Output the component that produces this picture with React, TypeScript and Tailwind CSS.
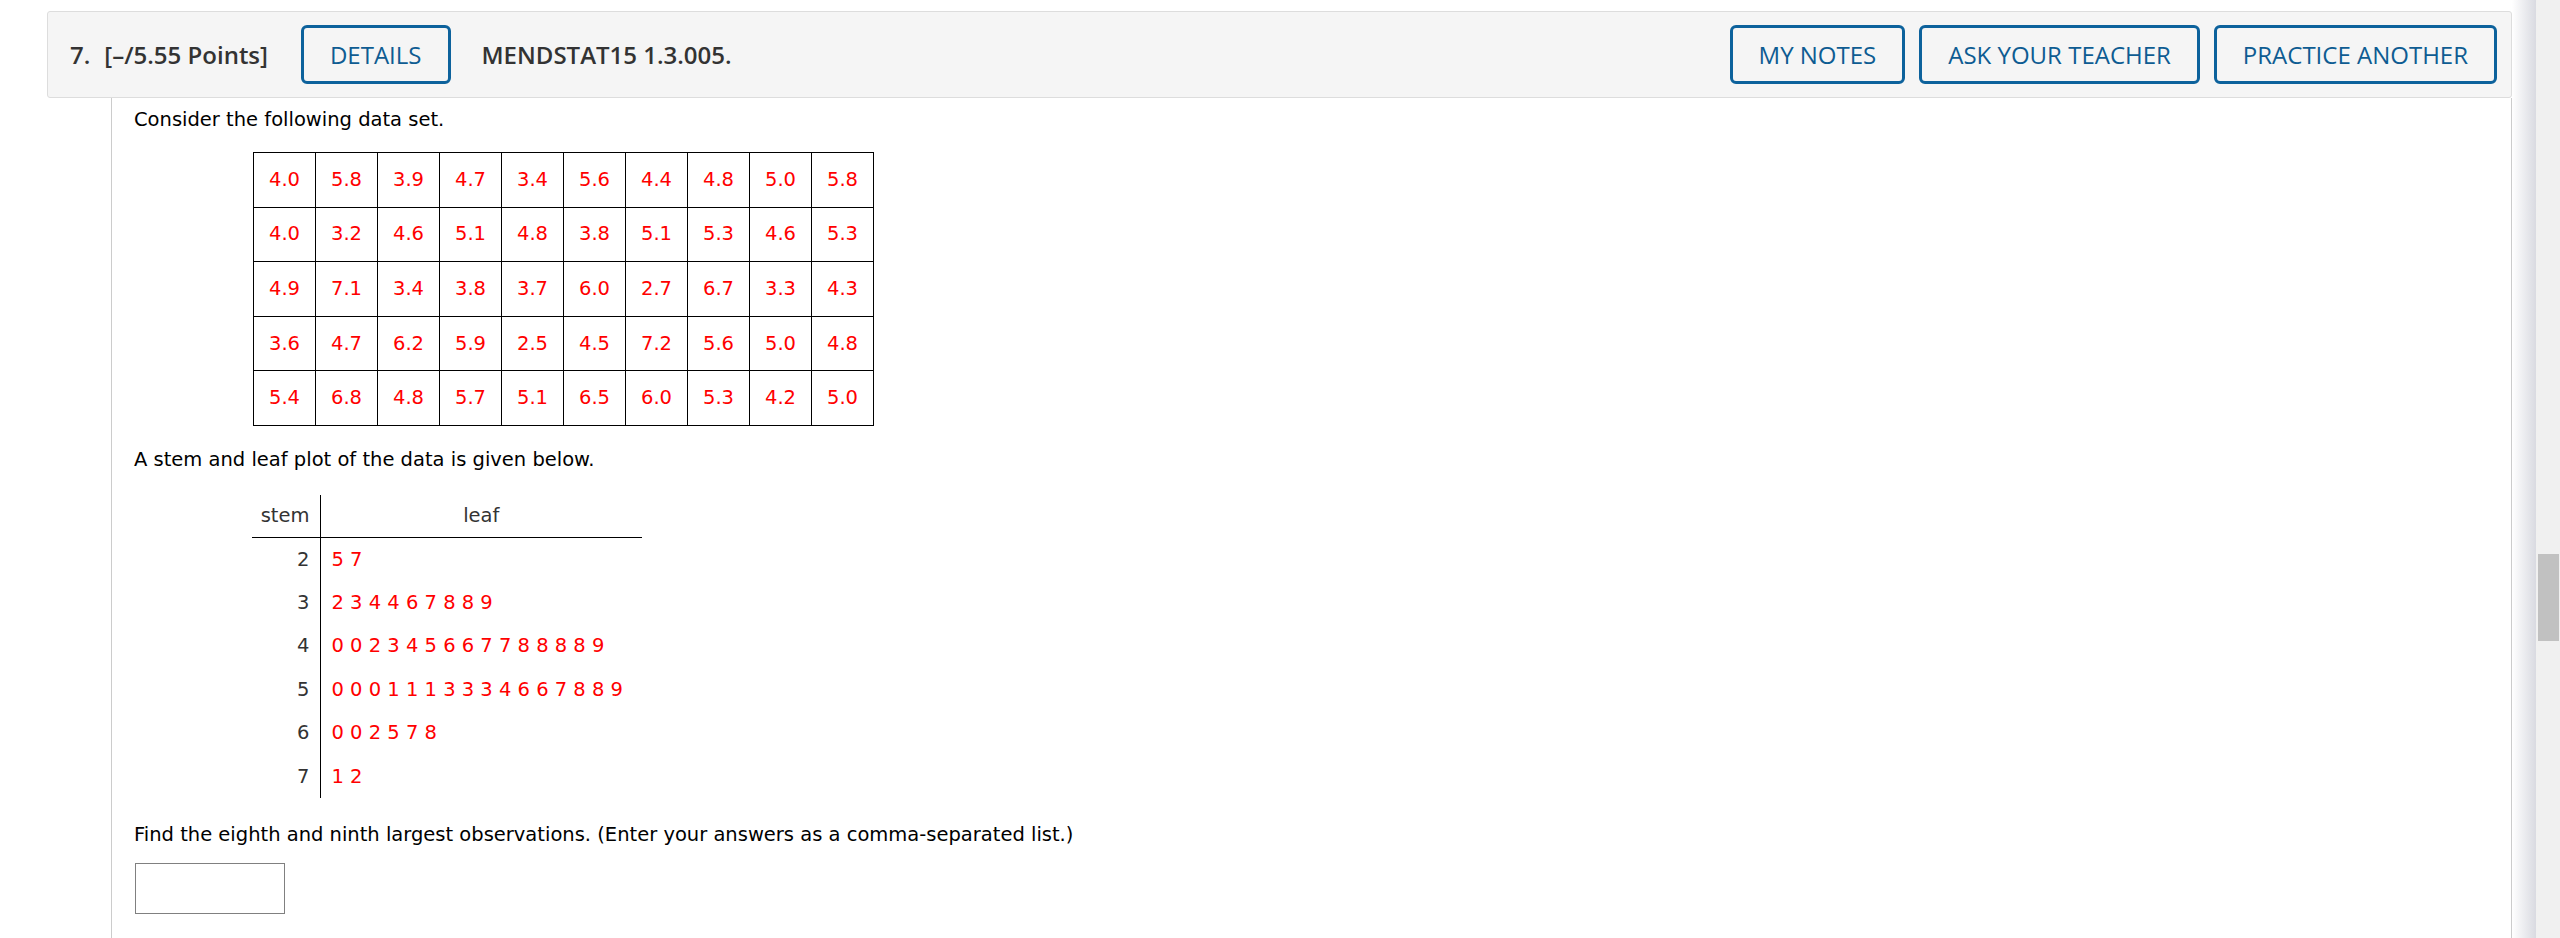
const DATA: string[][] = [
  ['4.0', '5.8', '3.9', '4.7', '3.4', '5.6', '4.4', '4.8', '5.0', '5.8'],
  ['4.0', '3.2', '4.6', '5.1', '4.8', '3.8', '5.1', '5.3', '4.6', '5.3'],
  ['4.9', '7.1', '3.4', '3.8', '3.7', '6.0', '2.7', '6.7', '3.3', '4.3'],
  ['3.6', '4.7', '6.2', '5.9', '2.5', '4.5', '7.2', '5.6', '5.0', '4.8'],
  ['5.4', '6.8', '4.8', '5.7', '5.1', '6.5', '6.0', '5.3', '4.2', '5.0'],
];

const STEMS: { stem: string; leaves: string }[] = [
  { stem: '2', leaves: '5 7' },
  { stem: '3', leaves: '2 3 4 4 6 7 8 8 9' },
  { stem: '4', leaves: '0 0 2 3 4 5 6 6 7 7 8 8 8 8 9' },
  { stem: '5', leaves: '0 0 0 1 1 1 3 3 3 4 6 6 7 8 8 9' },
  { stem: '6', leaves: '0 0 2 5 7 8' },
  { stem: '7', leaves: '1 2' },
];

function HeaderButton({ label }: { label: string }) {
  return (
    <button className="flex h-[59px] items-center rounded-[6px] border-[3px] border-[#0d629c] px-[26px] text-[24px] leading-none text-[#0e5c92]">
      {label}
    </button>
  );
}

export default function App() {
  return (
    <div className="flex h-[938px] w-[2560px] overflow-hidden bg-white">
      <main className="flex w-[2512px] flex-none flex-col pl-[47px] pt-[11px]">
        {/* question header */}
        <div className="flex h-[87px] items-center rounded-[3px] border border-[#dddddd] bg-[#f5f5f5] pl-[22px] pr-[14px] font-['Open_Sans',sans-serif] text-[24px] text-[#333333]">
          <span className="font-semibold">7.</span>
          <span className="ml-[14px] font-semibold">[–/5.55 Points]</span>
          <div className="ml-[33px]">
            <HeaderButton label="DETAILS" />
          </div>
          <span className="ml-[31px] font-semibold">MENDSTAT15 1.3.005.</span>
          <div className="ml-auto flex gap-[14px]">
            <HeaderButton label="MY NOTES" />
            <HeaderButton label="ASK YOUR TEACHER" />
            <HeaderButton label="PRACTICE ANOTHER" />
          </div>
        </div>

        {/* question body */}
        <div className="ml-[64px] flex-1 border-x border-[#cccccc] pl-[22px] pt-[8px] font-['DejaVu_Sans',sans-serif] text-[19.5px] leading-[28px] text-black">
          <p>Consider the following data set.</p>

          <table className="ml-[119px] mt-[18px] table-fixed border-collapse">
            <tbody>
              {DATA.map((row, i) => (
                <tr key={i}>
                  {row.map((v, j) => (
                    <td key={j} className="h-[54.6px] w-[62px] border border-black p-0 text-center text-[#ff0000]">
                      {v}
                    </td>
                  ))}
                </tr>
              ))}
            </tbody>
          </table>

          <p className="mt-[20px]">A stem and leaf plot of the data is given below.</p>

          <table className="ml-[118px] mt-[21px] border-collapse">
            <thead>
              <tr>
                <th className="h-[43px] w-[68px] border-b border-r border-black pr-[10px] text-right font-normal text-[#333333]">stem</th>
                <th className="h-[43px] w-[322px] border-b border-black text-center font-normal text-[#333333]">leaf</th>
              </tr>
            </thead>
            <tbody>
              {STEMS.map((r) => (
                <tr key={r.stem}>
                  <td className="h-[43.4px] border-r border-black pr-[10px] text-right text-[#333333]">{r.stem}</td>
                  <td className="h-[43.4px] pl-[11px] text-left whitespace-pre text-[#ff0000]">{r.leaves}</td>
                </tr>
              ))}
            </tbody>
          </table>

          <p className="mt-[23px]">
            Find the eighth and ninth largest observations. (Enter your answers as a comma-separated list.)
          </p>
          <input
            type="text"
            className="mt-[14px] ml-[1px] block h-[51px] w-[150px] border border-[#808080] bg-white outline-none"
          />
        </div>
      </main>

      {/* page shadow */}
      <div className="w-[24px] flex-none bg-linear-to-r from-white to-[#d9dae1]" />

      {/* scrollbar */}
      <div className="w-[24px] flex-none bg-[#f0f0f0]">
        <div className="ml-[2px] mt-[554px] h-[87px] w-[21px] bg-[#c1c1c1]" />
      </div>
    </div>
  );
}
